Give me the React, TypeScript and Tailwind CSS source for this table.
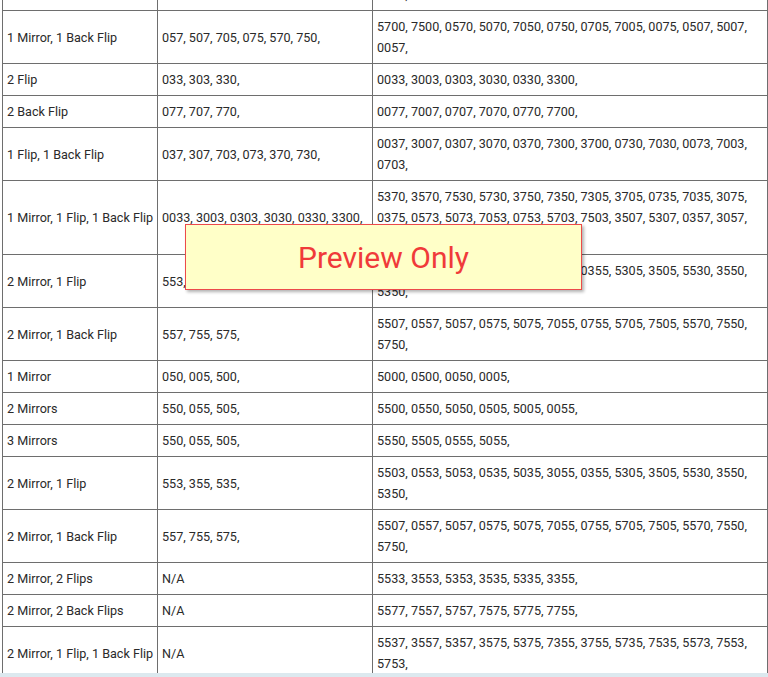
import React from "react";

const rows: [string, string, string][] = [
  ["1 Mirror, 1 Flip", "053, 503, 305, 035, 530, 350,", "5300, 3500, 0530, 5030, 3050, 0350, 0305, 3005, 0035, 0503, 5003, 0053,"],
  ["1 Mirror, 1 Back Flip", "057, 507, 705, 075, 570, 750,", "5700, 7500, 0570, 5070, 7050, 0750, 0705, 7005, 0075, 0507, 5007, 0057,"],
  ["2 Flip", "033, 303, 330,", "0033, 3003, 0303, 3030, 0330, 3300,"],
  ["2 Back Flip", "077, 707, 770,", "0077, 7007, 0707, 7070, 0770, 7700,"],
  ["1 Flip, 1 Back Flip", "037, 307, 703, 073, 370, 730,", "0037, 3007, 0307, 3070, 0370, 7300, 3700, 0730, 7030, 0073, 7003, 0703,"],
  ["1 Mirror, 1 Flip, 1 Back Flip", "0033, 3003, 0303, 3030, 0330, 3300,", "5370, 3570, 7530, 5730, 3750, 7350, 7305, 3705, 0735, 7035, 3075, 0375, 0573, 5073, 7053, 0753, 5703, 7503, 3507, 5307, 0357, 3057, 5037, 0537,"],
  ["2 Mirror, 1 Flip", "553, 355, 535,", "5503, 0553, 5053, 0535, 5035, 3055, 0355, 5305, 3505, 5530, 3550, 5350,"],
  ["2 Mirror, 1 Back Flip", "557, 755, 575,", "5507, 0557, 5057, 0575, 5075, 7055, 0755, 5705, 7505, 5570, 7550, 5750,"],
  ["1 Mirror", "050, 005, 500,", "5000, 0500, 0050, 0005,"],
  ["2 Mirrors", "550, 055, 505,", "5500, 0550, 5050, 0505, 5005, 0055,"],
  ["3 Mirrors", "550, 055, 505,", "5550, 5505, 0555, 5055,"],
  ["2 Mirror, 1 Flip", "553, 355, 535,", "5503, 0553, 5053, 0535, 5035, 3055, 0355, 5305, 3505, 5530, 3550, 5350,"],
  ["2 Mirror, 1 Back Flip", "557, 755, 575,", "5507, 0557, 5057, 0575, 5075, 7055, 0755, 5705, 7505, 5570, 7550, 5750,"],
  ["2 Mirror, 2 Flips", "N/A", "5533, 3553, 5353, 3535, 5335, 3355,"],
  ["2 Mirror, 2 Back Flips", "N/A", "5577, 7557, 5757, 7575, 5775, 7755,"],
  ["2 Mirror, 1 Flip, 1 Back Flip", "N/A", "5537, 3557, 5357, 3575, 5375, 7355, 3755, 5735, 7535, 5573, 7553, 5753,"],
];

export default function App() {
  return (
    <div className="w-[768px] h-[677px] flex flex-col bg-[#dce9ef] overflow-hidden" style={{ fontFamily: "Roboto, 'Liberation Sans', sans-serif" }}>
      <div className="relative h-[673px] bg-white overflow-hidden">
        <table className="ml-[2px] mt-[-43px] w-[765px] border-collapse table-fixed text-[12.6px] leading-[21px] text-[#2a2a2a]">
          <colgroup>
            <col className="w-[155px]" />
            <col className="w-[215px]" />
            <col className="w-[395px]" />
          </colgroup>
          <tbody>
            {rows.map((r, i) => (
              <tr key={i}>
                <td className="border border-[#6e6e6e] pl-[4px] pr-[2px] py-[5px] align-middle whitespace-nowrap">{r[0]}</td>
                <td className="border border-[#6e6e6e] pl-[4px] pr-[2px] py-[5px] align-middle whitespace-nowrap">{r[1]}</td>
                <td className="border border-[#6e6e6e] pl-[4px] pr-[5px] py-[5px] align-middle">{r[2]}</td>
              </tr>
            ))}
          </tbody>
        </table>
        <div className="absolute left-[185px] top-[224px] w-[397px] h-[66px] bg-[#ffffc8] border-[1.5px] border-[#ec4a4a] shadow-[2px_2px_3px_rgba(0,0,0,0.3)] flex items-center justify-center">
          <span className="text-[30px] font-normal text-[#f03a3a]" style={{ fontFamily: "Roboto, 'Liberation Sans', sans-serif" }}>Preview Only</span>
        </div>
      </div>
      <div className="h-[4px] bg-[#dce9ef]" />
    </div>
  );
}
